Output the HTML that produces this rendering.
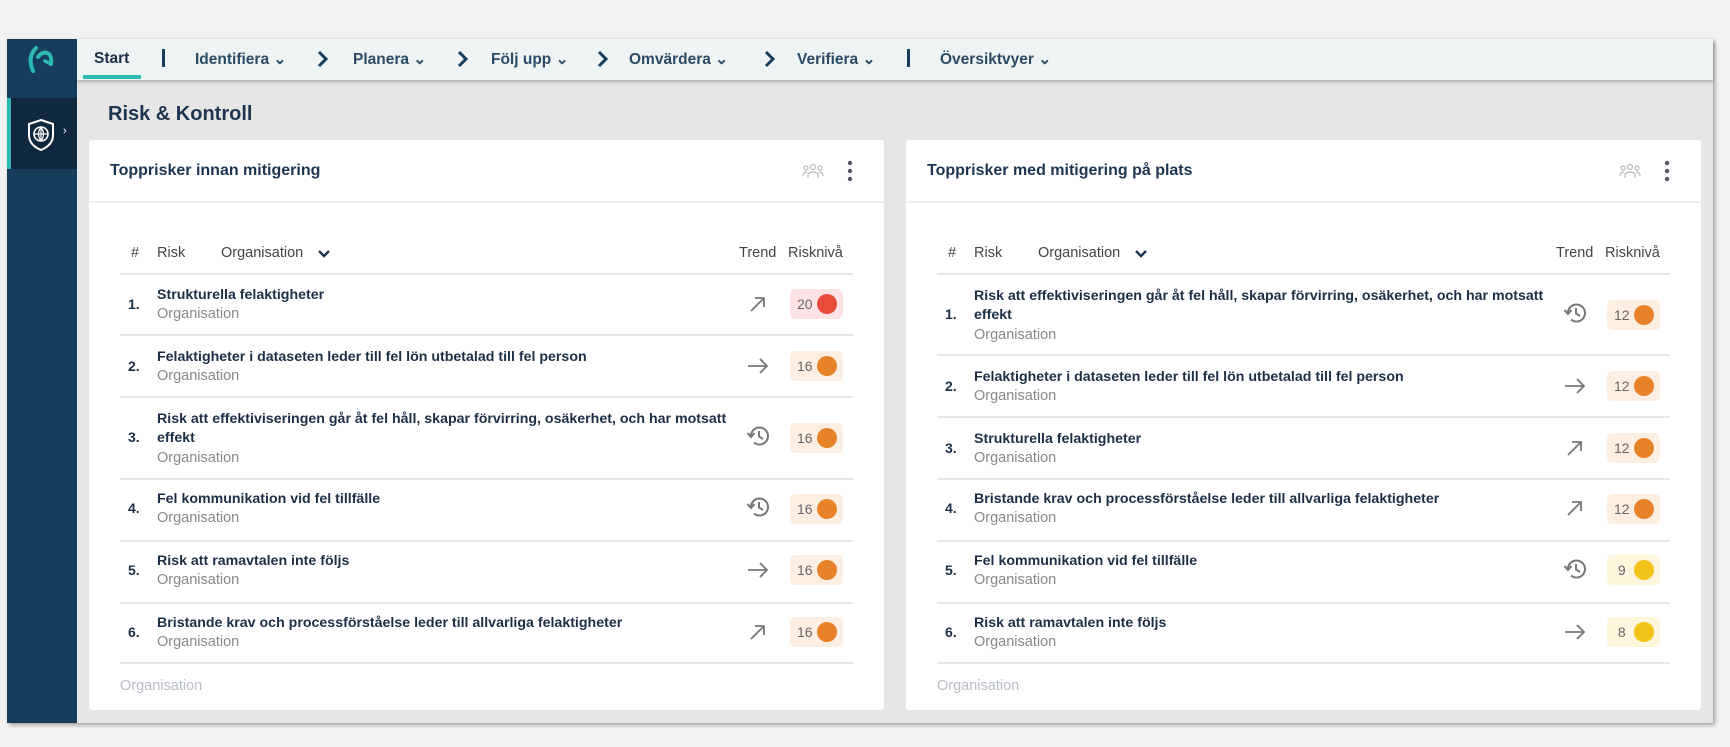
<!DOCTYPE html>
<html><head><meta charset="utf-8"><style>
*{margin:0;padding:0;box-sizing:border-box}
body{width:1730px;height:747px;background:#f2f2f2;font-family:"Liberation Sans",sans-serif;position:relative;overflow:hidden;color:#1d2f45}
.frame{position:absolute;left:7px;top:39px;width:1706px;height:684px;background:#e6e6e6;box-shadow:2px 2px 4px rgba(0,0,0,.35)}
.side{position:absolute;left:7px;top:39px;width:70px;height:684px;background:#173d5d}
.sel{position:absolute;left:7px;top:98px;width:70px;height:71px;background:#10283e;border-left:4px solid #2bb9b1}
.nav{position:absolute;left:77px;top:39px;width:1636px;height:41px;background:#eef3f4;box-shadow:0 2px 3px rgba(0,0,0,.25)}
.nav span{position:absolute;top:11px;font-size:15.5px;font-weight:bold;color:#2b4a66}
.nav .st{color:#1d2f45}
.nav .ul{position:absolute;left:6px;top:36px;width:58px;height:4px;background:#2bb9b1}
.nav .bar{position:absolute;top:10px;width:3px;height:18px;background:#173d5d}
.nav svg{position:absolute;top:11px}
h1{position:absolute;left:108px;top:103px;font-size:20px;color:#1d3550}
.card{position:absolute;top:140px;width:795px;height:570px;background:#fff;border-radius:3px}
.card .hd{height:63px;border-bottom:2px solid #efefef;position:relative}
.card .hd b{position:absolute;left:21px;top:22px;font-size:16px;color:#1d3550}
.th{position:absolute;top:105px;font-size:14.5px;color:#444}
.hl{position:absolute;left:31px;width:733px;height:2px;background:#e3e6ea}
.n{position:absolute;left:39px;font-size:14px;font-weight:bold;color:#1d2f45}
.t{position:absolute;left:68px;width:580px;font-size:14.2px;font-weight:bold;line-height:19px;color:#1d2f45;margin-top:2px}
.o{position:absolute;left:68px;font-size:14.5px;color:#888;margin-top:2px}
.bd{position:absolute;left:701px;width:53px;height:30px;border-radius:5px;font-size:14px;color:#666;padding:7px 0 0 7px}
.bd i{position:absolute;right:6px;top:5px;width:20px;height:20px;border-radius:50%}
.r{background:#fde3e3}.r i{background:#e84b3c}
.or{background:#fdeee2}.or i{background:#e8822a}
.y{background:#fdf6dd}.y i{background:#f0c419}
.tr{position:absolute;left:657px}
.ft{position:absolute;left:31px;top:538px;font-size:14.5px;color:#b8bec6}
</style></head><body>
<div class="frame"></div>
<div class="side"></div>
<svg style="position:absolute;left:24px;top:43px" width="36" height="34" viewBox="0 0 36 34"><path d="M12 5 Q3 14 9 28" stroke="#2bb9b1" stroke-width="4" fill="none" stroke-linecap="round"/><path d="M14 14 Q19 7 25 11 Q28 14 27 21" stroke="#2bb9b1" stroke-width="4" fill="none" stroke-linecap="round"/><path d="M21 18 L27 21" stroke="#2bb9b1" stroke-width="3.5" stroke-linecap="round"/></svg>
<div class="sel"></div>
<svg style="position:absolute;left:26px;top:118px" width="30" height="34" viewBox="0 0 30 34"><path d="M15 2 L27 6 V17 Q27 27 15 32 Q3 27 3 17 V6 Z" stroke="#fff" stroke-width="2" fill="none"/><circle cx="15" cy="16" r="7" stroke="#fff" stroke-width="1.6" fill="none"/><path d="M8 16H22M15 9V23M15 9Q10 16 15 23M15 9Q20 16 15 23" stroke="#fff" stroke-width="1.2" fill="none"/></svg>
<span style="position:absolute;left:63px;top:125px;color:#fff;font-size:11px">›</span>
<div class="nav">
<span class="st" style="left:17px">Start</span><div class="ul"></div>
<div class="bar" style="left:85px"></div>
<span style="left:118px">Identifiera ⌄</span>
<svg style="left:238px" width="14" height="18"><path d="M4 2L11 9L4 16" stroke="#173d5d" stroke-width="3" fill="none"/></svg>
<span style="left:276px">Planera ⌄</span>
<svg style="left:518px" width="14" height="18"><path d="M4 2L11 9L4 16" stroke="#173d5d" stroke-width="3" fill="none"/></svg>
<span style="left:414px">Följ upp ⌄</span>
<svg style="left:378px" width="14" height="18"><path d="M4 2L11 9L4 16" stroke="#173d5d" stroke-width="3" fill="none"/></svg>
<span style="left:552px">Omvärdera ⌄</span>
<svg style="left:685px" width="14" height="18"><path d="M4 2L11 9L4 16" stroke="#173d5d" stroke-width="3" fill="none"/></svg>
<span style="left:720px">Verifiera ⌄</span>
<div class="bar" style="left:830px"></div>
<span style="left:863px">Översiktvyer ⌄</span>
</div>
<h1>Risk &amp; Kontroll</h1>

<div class="card" style="left:89px">
<div class="hd"><b>Topprisker innan mitigering</b>
<svg style="position:absolute;left:713px;top:22px" width="22" height="18" viewBox="0 0 22 18"><g stroke="#bbb" stroke-width="1.2" fill="none"><circle cx="11" cy="5" r="2.5"/><circle cx="4" cy="6" r="2"/><circle cx="18" cy="6" r="2"/><path d="M6 16V12Q11 8 16 12V16M1 14Q1 10 5 10M21 14Q21 10 17 10"/></g></svg>
<svg style="position:absolute;left:758px;top:20px" width="6" height="22"><circle cx="3" cy="3" r="2.2" fill="#556"/><circle cx="3" cy="11" r="2.2" fill="#556"/><circle cx="3" cy="19" r="2.2" fill="#556"/></svg>
</div>
<span class="th" style="left:42px">#</span><span class="th" style="left:68px">Risk</span><span class="th" style="left:132px">Organisation</span>
<svg style="position:absolute;left:229px;top:109px" width="12" height="10"><path d="M1 2L6 7L11 2" stroke="#1d3550" stroke-width="2.4" fill="none"/></svg>
<span class="th" style="left:650px">Trend</span><span class="th" style="left:699px">Risknivå</span>
<div class="hl" style="top:133px"></div>
<span class="n" style="top:156px">1.</span><div class="t" style="top:144px">Strukturella felaktigheter</div><span class="o" style="top:164px">Organisation</span>
<svg class="tr" style="top:152px" width="24" height="24"><path d="M5 19L18 6M9 6H18V15" stroke="#777" stroke-width="1.8" fill="none"/></svg>
<div class="bd r" style="top:149px">20<i></i></div>
<div class="hl" style="top:194px"></div>
<span class="n" style="top:218px">2.</span><div class="t" style="top:206px">Felaktigheter i dataseten leder till fel lön utbetalad till fel person</div><span class="o" style="top:226px">Organisation</span>
<svg class="tr" style="top:214px" width="24" height="24"><path d="M2 12H21M14 5L21 12L14 19" stroke="#777" stroke-width="1.8" fill="none"/></svg>
<div class="bd or" style="top:211px">16<i></i></div>
<div class="hl" style="top:256px"></div>
<span class="n" style="top:289px">3.</span><div class="t" style="top:268px">Risk att effektiviseringen går åt fel håll, skapar förvirring, osäkerhet, och har motsatt effekt</div><span class="o" style="top:308px">Organisation</span>
<svg class="tr" style="top:283px" width="26" height="26" viewBox="0 0 26 26"><path d="M5 13A8.5 8.5 0 1 1 8 19.5" stroke="#777" stroke-width="2" fill="none"/><path d="M1.5 10L5 14L8.5 10" stroke="#777" stroke-width="2" fill="none"/><path d="M13 8V13.5L17 16" stroke="#777" stroke-width="2" fill="none"/></svg>
<div class="bd or" style="top:283px">16<i></i></div>
<div class="hl" style="top:338px"></div>
<span class="n" style="top:360px">4.</span><div class="t" style="top:348px">Fel kommunikation vid fel tillfälle</div><span class="o" style="top:368px">Organisation</span>
<svg class="tr" style="top:354px" width="26" height="26" viewBox="0 0 26 26"><path d="M5 13A8.5 8.5 0 1 1 8 19.5" stroke="#777" stroke-width="2" fill="none"/><path d="M1.5 10L5 14L8.5 10" stroke="#777" stroke-width="2" fill="none"/><path d="M13 8V13.5L17 16" stroke="#777" stroke-width="2" fill="none"/></svg>
<div class="bd or" style="top:354px">16<i></i></div>
<div class="hl" style="top:400px"></div>
<span class="n" style="top:422px">5.</span><div class="t" style="top:410px">Risk att ramavtalen inte följs</div><span class="o" style="top:430px">Organisation</span>
<svg class="tr" style="top:418px" width="24" height="24"><path d="M2 12H21M14 5L21 12L14 19" stroke="#777" stroke-width="1.8" fill="none"/></svg>
<div class="bd or" style="top:415px">16<i></i></div>
<div class="hl" style="top:462px"></div>
<span class="n" style="top:484px">6.</span><div class="t" style="top:472px">Bristande krav och processförståelse leder till allvarliga felaktigheter</div><span class="o" style="top:492px">Organisation</span>
<svg class="tr" style="top:480px" width="24" height="24"><path d="M5 19L18 6M9 6H18V15" stroke="#777" stroke-width="1.8" fill="none"/></svg>
<div class="bd or" style="top:477px">16<i></i></div>
<div class="hl" style="top:522px"></div>
<span class="ft">Organisation</span>
</div>

<div class="card" style="left:906px">
<div class="hd"><b>Topprisker med mitigering på plats</b>
<svg style="position:absolute;left:713px;top:22px" width="22" height="18" viewBox="0 0 22 18"><g stroke="#bbb" stroke-width="1.2" fill="none"><circle cx="11" cy="5" r="2.5"/><circle cx="4" cy="6" r="2"/><circle cx="18" cy="6" r="2"/><path d="M6 16V12Q11 8 16 12V16M1 14Q1 10 5 10M21 14Q21 10 17 10"/></g></svg>
<svg style="position:absolute;left:758px;top:20px" width="6" height="22"><circle cx="3" cy="3" r="2.2" fill="#556"/><circle cx="3" cy="11" r="2.2" fill="#556"/><circle cx="3" cy="19" r="2.2" fill="#556"/></svg>
</div>
<span class="th" style="left:42px">#</span><span class="th" style="left:68px">Risk</span><span class="th" style="left:132px">Organisation</span>
<svg style="position:absolute;left:229px;top:109px" width="12" height="10"><path d="M1 2L6 7L11 2" stroke="#1d3550" stroke-width="2.4" fill="none"/></svg>
<span class="th" style="left:650px">Trend</span><span class="th" style="left:699px">Risknivå</span>
<div class="hl" style="top:133px"></div>
<span class="n" style="top:166px">1.</span><div class="t" style="top:145px">Risk att effektiviseringen går åt fel håll, skapar förvirring, osäkerhet, och har motsatt effekt</div><span class="o" style="top:185px">Organisation</span>
<svg class="tr" style="top:160px" width="26" height="26" viewBox="0 0 26 26"><path d="M5 13A8.5 8.5 0 1 1 8 19.5" stroke="#777" stroke-width="2" fill="none"/><path d="M1.5 10L5 14L8.5 10" stroke="#777" stroke-width="2" fill="none"/><path d="M13 8V13.5L17 16" stroke="#777" stroke-width="2" fill="none"/></svg>
<div class="bd or" style="top:160px">12<i></i></div>
<div class="hl" style="top:214px"></div>
<span class="n" style="top:238px">2.</span><div class="t" style="top:226px">Felaktigheter i dataseten leder till fel lön utbetalad till fel person</div><span class="o" style="top:246px">Organisation</span>
<svg class="tr" style="top:234px" width="24" height="24"><path d="M2 12H21M14 5L21 12L14 19" stroke="#777" stroke-width="1.8" fill="none"/></svg>
<div class="bd or" style="top:231px">12<i></i></div>
<div class="hl" style="top:276px"></div>
<span class="n" style="top:300px">3.</span><div class="t" style="top:288px">Strukturella felaktigheter</div><span class="o" style="top:308px">Organisation</span>
<svg class="tr" style="top:296px" width="24" height="24"><path d="M5 19L18 6M9 6H18V15" stroke="#777" stroke-width="1.8" fill="none"/></svg>
<div class="bd or" style="top:293px">12<i></i></div>
<div class="hl" style="top:338px"></div>
<span class="n" style="top:360px">4.</span><div class="t" style="top:348px">Bristande krav och processförståelse leder till allvarliga felaktigheter</div><span class="o" style="top:368px">Organisation</span>
<svg class="tr" style="top:356px" width="24" height="24"><path d="M5 19L18 6M9 6H18V15" stroke="#777" stroke-width="1.8" fill="none"/></svg>
<div class="bd or" style="top:354px">12<i></i></div>
<div class="hl" style="top:400px"></div>
<span class="n" style="top:422px">5.</span><div class="t" style="top:410px">Fel kommunikation vid fel tillfälle</div><span class="o" style="top:430px">Organisation</span>
<svg class="tr" style="top:416px" width="26" height="26" viewBox="0 0 26 26"><path d="M5 13A8.5 8.5 0 1 1 8 19.5" stroke="#777" stroke-width="2" fill="none"/><path d="M1.5 10L5 14L8.5 10" stroke="#777" stroke-width="2" fill="none"/><path d="M13 8V13.5L17 16" stroke="#777" stroke-width="2" fill="none"/></svg>
<div class="bd y" style="top:415px">&nbsp;9<i></i></div>
<div class="hl" style="top:462px"></div>
<span class="n" style="top:484px">6.</span><div class="t" style="top:472px">Risk att ramavtalen inte följs</div><span class="o" style="top:492px">Organisation</span>
<svg class="tr" style="top:480px" width="24" height="24"><path d="M2 12H21M14 5L21 12L14 19" stroke="#777" stroke-width="1.8" fill="none"/></svg>
<div class="bd y" style="top:477px">&nbsp;8<i></i></div>
<div class="hl" style="top:522px"></div>
<span class="ft">Organisation</span>
</div>
</body></html>
